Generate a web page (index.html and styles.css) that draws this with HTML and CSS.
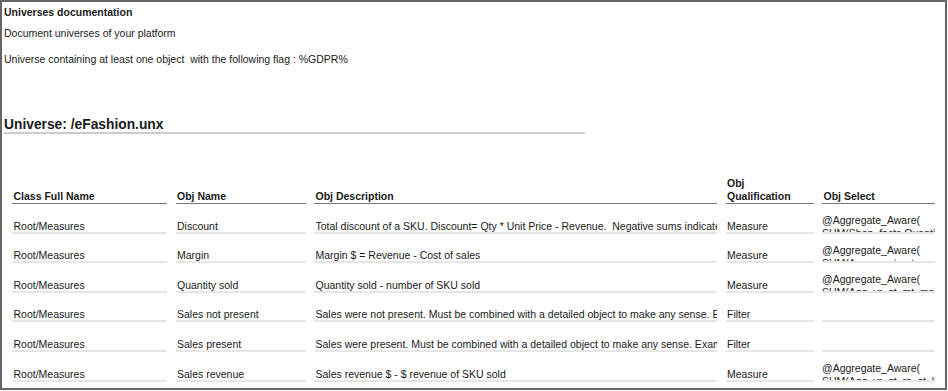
FILE: index.html
```html
<!DOCTYPE html>
<html>
<head>
<meta charset="utf-8">
<title>Universes documentation</title>
<link rel="stylesheet" href="styles.css">
</head>
<body>
<div class="frame">
  <div class="title">Universes documentation</div>
  <div class="intro">Document universes of your platform</div>
  <div class="flag">Universe containing at least one object&nbsp; with the following flag : %GDPR%</div>
  <h2 class="universe">Universe: /eFashion.unx</h2>
  <div class="table">
    <div class="row head">
      <div class="cell">Class Full Name</div>
      <div class="cell">Obj Name</div>
      <div class="cell">Obj Description</div>
      <div class="cell">Obj<br>Qualification</div>
      <div class="cell">Obj Select</div>
    </div>
    <div class="row">
      <div class="cell">Root/Measures</div>
      <div class="cell">Discount</div>
      <div class="cell">Total discount of a SKU. Discount= Qty * Unit Price - Revenue.&nbsp; Negative sums indicate that the SKU was sold at a premium.</div>
      <div class="cell">Measure</div>
      <div class="cell sel">@Aggregate_Aware( SUM(Shop_facts.Quantity_sold*Article_lookup.Sale_price))</div>
    </div>
    <div class="row">
      <div class="cell">Root/Measures</div>
      <div class="cell">Margin</div>
      <div class="cell">Margin $ = Revenue - Cost of sales</div>
      <div class="cell">Measure</div>
      <div class="cell sel">@Aggregate_Aware( SUM(Agg_yr_qt_mt_mn_wk_rg_cy_sn_sr_qt_ma.Margin))</div>
    </div>
    <div class="row">
      <div class="cell">Root/Measures</div>
      <div class="cell">Quantity sold</div>
      <div class="cell">Quantity sold - number of SKU sold</div>
      <div class="cell">Measure</div>
      <div class="cell sel">@Aggregate_Aware( SUM(Agg_yr_qt_mt_mn_wk_rg_cy_sn_sr_qt_ma.Quantity_sold))</div>
    </div>
    <div class="row">
      <div class="cell">Root/Measures</div>
      <div class="cell">Sales not present</div>
      <div class="cell">Sales were not present. Must be combined with a detailed object to make any sense. Example: Stores with no sales.</div>
      <div class="cell">Filter</div>
      <div class="cell sel"></div>
    </div>
    <div class="row">
      <div class="cell">Root/Measures</div>
      <div class="cell">Sales present</div>
      <div class="cell">Sales were present. Must be combined with a detailed object to make any sense. Example: Stores with sales.</div>
      <div class="cell">Filter</div>
      <div class="cell sel"></div>
    </div>
    <div class="row">
      <div class="cell">Root/Measures</div>
      <div class="cell">Sales revenue</div>
      <div class="cell">Sales revenue $ - $ revenue of SKU sold</div>
      <div class="cell">Measure</div>
      <div class="cell sel">@Aggregate_Aware( SUM(Agg_yr_qt_rn_st_ln_ca_sr.Sales_revenue))</div>
    </div>
  </div>
</div>
</body>
</html>
```
FILE: styles.css
```css
html, body {
  margin: 0;
  padding: 0;
  background: #ffffff;
}

body {
  font-family: "Liberation Sans", Arial, sans-serif;
  font-size: 10.5px;
  line-height: 13px;
  color: #1a1a1a;
}

.frame {
  box-sizing: border-box;
  width: 947px;
  height: 390px;
  border: 2px solid #666666;
  padding: 0 0 0 2px;
  overflow: hidden;
}

.title {
  font-weight: bold;
  margin-top: 4px;
}

.intro {
  margin-top: 8px;
}

.flag {
  margin-top: 13px;
}

.universe {
  width: 581px;
  margin: 52px 0 0 0;
  font-size: 13.8px;
  line-height: 14px;
  font-weight: bold;
  border-bottom: 2px solid #cccccc;
}

.table {
  margin: 43px 0 0 8px;
  display: flex;
  flex-direction: column;
}

.row {
  display: grid;
  grid-template-columns: 155px 130px 403px 88px 113px;
  column-gap: 8.5px;
  padding-top: 10px;
}

.row .cell {
  box-sizing: border-box;
  height: 19.6px;
  padding: 0 0 0 1.5px;
  border-bottom: 2px solid #e6e6e6;
  overflow: hidden;
  white-space: nowrap;
  display: flex;
  align-items: flex-end;
  line-height: 12px;
}

.row .cell.sel {
  display: block;
  white-space: normal;
  line-height: 13px;
  padding-left: 0;
}

.row.head {
  padding-top: 0;
}

.row.head .cell {
  height: auto;
  font-weight: bold;
  border-bottom: 1px solid #777777;
  line-height: 13px;
  padding-bottom: 0;
  display: flex;
  align-items: flex-end;
  white-space: nowrap;
}
```
